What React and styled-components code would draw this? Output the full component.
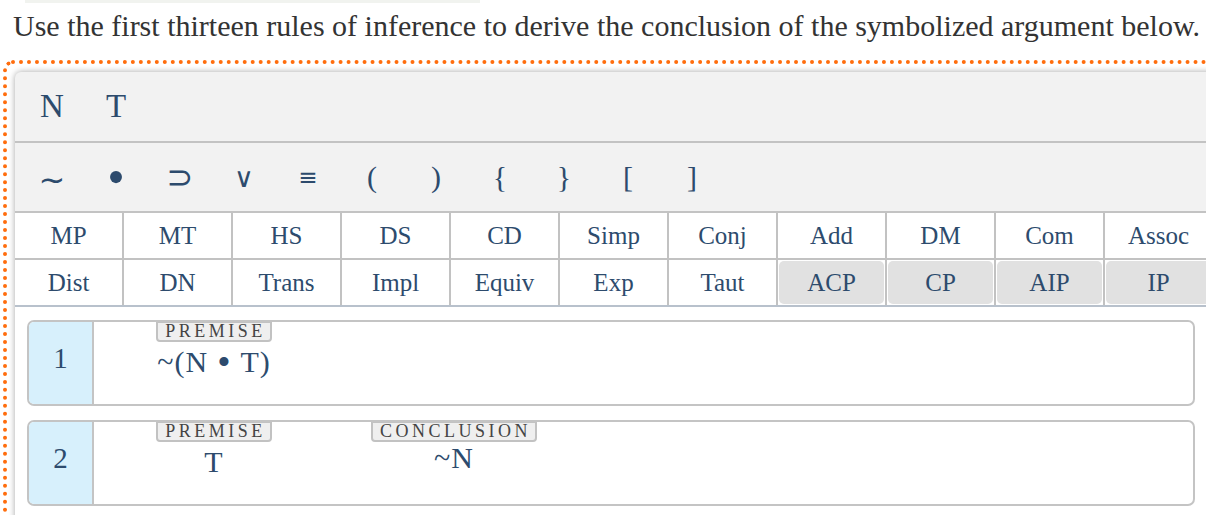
import React from 'react'
import styled, { createGlobalStyle } from 'styled-components'

const ink = '#2d4b6d'
const serif = `"Liberation Serif", "Times New Roman", "DejaVu Serif", serif`
const sans = `"DejaVu Sans", "Liberation Sans", sans-serif`

const GlobalStyle = createGlobalStyle`
  html, body {
    margin: 0;
    padding: 0;
    background: #fff;
    overflow: hidden;
  }
  body {
    font-family: ${serif};
  }
`

const variables = ['N', 'T']

const symbols = [
  { c: '~', size: 32, font: sans, lift: -3 },
  { c: '•', size: 50, font: serif, lift: 0 },
  { c: '⊃', size: 32, font: sans, lift: 0 },
  { c: '∨', size: 27, font: sans, lift: 0 },
  { c: '≡', size: 23, font: sans, lift: 0 },
  { c: '(', size: 30, font: serif, lift: 0 },
  { c: ')', size: 30, font: serif, lift: 0 },
  { c: '{', size: 30, font: serif, lift: 0 },
  { c: '}', size: 30, font: serif, lift: 0 },
  { c: '[', size: 30, font: serif, lift: 0 },
  { c: ']', size: 30, font: serif, lift: 0 },
]

const rules = [
  ['MP', 'MT', 'HS', 'DS', 'CD', 'Simp', 'Conj', 'Add', 'DM', 'Com', 'Assoc'],
  ['Dist', 'DN', 'Trans', 'Impl', 'Equiv', 'Exp', 'Taut', 'ACP', 'CP', 'AIP', 'IP'],
]
const proofRules = ['ACP', 'CP', 'AIP', 'IP']

const lines = [
  { n: 1, cells: [{ tag: 'PREMISE', f: '~(N•T)' }] },
  { n: 2, cells: [{ tag: 'PREMISE', f: 'T' }, { tag: 'CONCLUSION', f: '~N', up: 4 }] },
]

const renderFormula = (f) =>
  f.split('').map((ch, i) => (ch === '•' ? <Op key={i}>•</Op> : ch))

const App = () => {
  return (
    <Page>
      <GlobalStyle />
      <PrevEdge />
      <Prompt>
        Use the first thirteen rules of inference to derive the conclusion of the symbolized argument below.
      </Prompt>
      <Frame>
        <Panel>
          <KeyRow $h={69}>
            {variables.map((v) => (
              <Key key={v} $size={33} $font={serif}>{v}</Key>
            ))}
          </KeyRow>
          <KeyRow $h={68}>
            {symbols.map((s) => (
              <Key key={s.c} $size={s.size} $font={s.font} $lift={s.lift}>{s.c}</Key>
            ))}
          </KeyRow>
          <RuleGrid>
            {rules.flat().map((r) => (
              <RuleCell key={r}>
                <RuleButton $shaded={proofRules.includes(r)}>{r}</RuleButton>
              </RuleCell>
            ))}
          </RuleGrid>
          <Lines>
            {lines.map((l) => (
              <LineBox key={l.n}>
                <LineNo>{l.n}</LineNo>
                {l.cells.map((c, i) => (
                  <LineCol key={i}>
                    <Tag>{c.tag}</Tag>
                    <Formula $up={c.up}>{renderFormula(c.f)}</Formula>
                  </LineCol>
                ))}
              </LineBox>
            ))}
          </Lines>
        </Panel>
      </Frame>
    </Page>
  )
}

export default App

const Page = styled.div`
  width: 1206px;
  height: 515px;
  overflow: hidden;
`

const PrevEdge = styled.div`
  margin-left: 25px;
  width: 455px;
  height: 3px;
  background: #f1f3ef;
`

const Prompt = styled.p`
  margin: 6px 0 0 13px;
  font-size: 30px;
  line-height: 34px;
  color: #333;
  white-space: nowrap;
`

const Frame = styled.div`
  margin: 17px 0 0 3px;
  width: 1240px;
  border-top: 4px dotted #ff6d0d;
  border-left: 4px dotted #ff6d0d;
  border-top-left-radius: 10px;
  padding: 8px 0 0 8px;
`

const Panel = styled.div`
  width: 1225px;
  background: #f2f2f2;
  box-shadow: 0 0 6px rgba(0, 0, 0, 0.35);
  border-top-left-radius: 6px;
  overflow: hidden;
`

const KeyRow = styled.div`
  display: flex;
  align-items: center;
  height: ${(p) => p.$h}px;
  padding-left: 5px;
  border-bottom: 2px solid #c3c3c3;
`

const Key = styled.span`
  width: 64px;
  height: 40px;
  display: flex;
  align-items: center;
  justify-content: center;
  font-family: ${(p) => p.$font};
  font-size: ${(p) => p.$size}px;
  line-height: 1;
  color: ${ink};
  transform: translateY(${(p) => -(p.$lift || 0)}px);
  cursor: pointer;
`

const RuleGrid = styled.div`
  display: grid;
  grid-template-columns: repeat(11, 107px);
  grid-auto-rows: 45px;
  gap: 2px;
  background: #c2c2c2;
  border-bottom: 2px solid #b8c1cc;
`

const RuleCell = styled.div`
  background: #fff;
  display: flex;
`

const RuleButton = styled.div`
  flex: 1;
  margin: 1px;
  display: flex;
  align-items: center;
  justify-content: center;
  border-radius: 5px;
  background: ${(p) => (p.$shaded ? '#e1e1e1' : 'transparent')};
  font-size: 25px;
  color: ${ink};
  cursor: pointer;
`

const Lines = styled.div`
  background: #fff;
  padding: 13px 0 20px 12px;
  display: flex;
  flex-direction: column;
  gap: 14px;
`

const LineBox = styled.div`
  box-sizing: border-box;
  display: flex;
  width: 1168px;
  height: 86px;
  border: 2px solid #c4c4c4;
  border-radius: 7px;
  overflow: hidden;
  background: #fff;
`

const LineNo = styled.div`
  width: 63px;
  flex-shrink: 0;
  border-right: 2px solid #c4c4c4;
  background: #d7f0fc;
  text-align: center;
  padding-top: 20px;
  font-size: 29px;
  line-height: 32px;
  color: ${ink};
`

const LineCol = styled.div`
  width: 240px;
  display: flex;
  flex-direction: column;
  align-items: center;
`

const Tag = styled.span`
  font-size: 18px;
  line-height: 17px;
  letter-spacing: 3.5px;
  padding: 0 4px 0 7px;
  color: #444;
  background: #efefef;
  border: 2px solid #c2c2c2;
  border-top-width: 1px;
  border-radius: 0 0 4px 4px;
`

const Formula = styled.span`
  margin-top: ${(p) => 4 - (p.$up || 0)}px;
  font-size: 30px;
  line-height: 32px;
  letter-spacing: 1px;
  white-space: pre;
  color: ${ink};
`

const Op = styled.span`
  display: inline-block;
  margin: 0 9px;
  font-size: 38px;
  line-height: 32px;
  vertical-align: top;
`
